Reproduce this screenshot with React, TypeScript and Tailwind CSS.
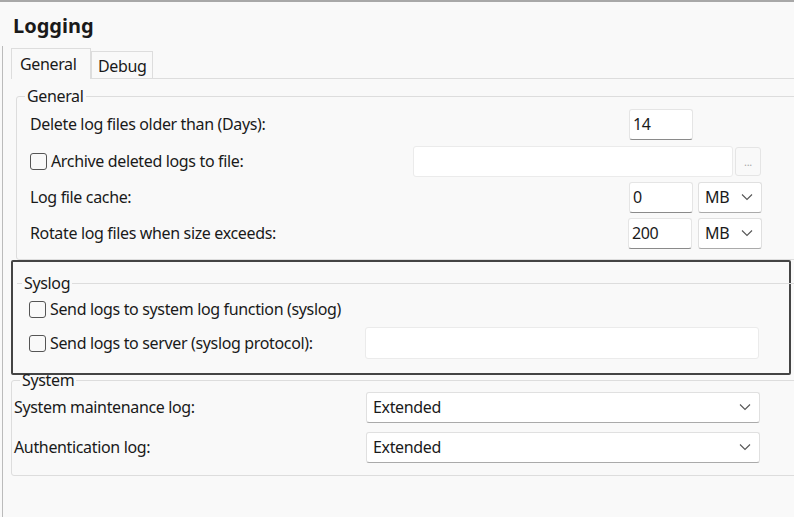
import React from "react";

const Chev = () => (
  <svg width="12" height="8" viewBox="0 0 12 8" className="text-[#555]"><path d="M1 1.5 6 6.5 11 1.5" fill="none" stroke="currentColor" strokeWidth="1.1" /></svg>
);
const Box = () => <span className="inline-block w-[17px] h-[17px] border border-[#555] rounded-[3px] bg-[#f9f9f9] mr-[4px] shrink-0" />;
const Input = ({ v, w, cls = "" }: { v?: string; w: string; cls?: string }) => (
  <div className={`${w} ${cls} h-[31px] bg-white border border-[#e5e5e5] border-b-[#8a8a8a] rounded-[3px] px-[3px] flex items-center`}>{v}</div>
);
const Sel = ({ v, w }: { v: string; w: string }) => (
  <div className={`${w} h-[31px] bg-white border border-[#e0e0e0] border-b-[#aaa] rounded-[3px] pl-[6px] pr-[8px] flex items-center justify-between`}>
    <span>{v}</span><Chev />
  </div>
);

export default function App() {
  return (
    <div className="w-[794px] h-[517px] bg-[#f9f9f9] overflow-hidden text-[16px] text-[#1a1a1a] relative" style={{ fontFamily: '"Noto Sans", "Liberation Sans", sans-serif', letterSpacing: "-0.35px" }}>
      <div className="h-[2px] bg-[#a8a8a8]" />
      <div className="pl-[13px] pt-[9px] h-[44px] text-[20px] font-bold tracking-normal">Logging</div>
      <div className="border-l border-[#bbb] ml-[2px] h-[480px] pl-[8px]">
        <div className="flex items-end h-[32px]">
          <div className="w-[80px] h-[31px] border border-[#ddd] border-b-0 bg-[#f9f9f9] pl-[8px] pt-[3px] relative top-[1px]">General</div>
          <div className="w-[62px] h-[27px] border border-[#ddd] border-b-0 pl-[6px] pt-[2px]">Debug</div>
        </div>
        <div className="border-t border-[#ddd] pl-[5px] pt-[16px]">
          <fieldset className="border border-[#ddd] rounded-[3px] w-[900px] pl-[13px] pb-[8px] -mt-[8px]">
            <legend className="px-[2px] -ml-[5px] leading-[18px]">General</legend>
            <div className="w-[732px]">
              <div className="flex items-center justify-between h-[38px]">
                <span>Delete log files older than (Days):</span>
                <div className="flex"><Input v="14" w="w-[64px]" /><div className="w-[69px]" /></div>
              </div>
              <div className="flex items-center justify-between h-[36px]">
                <span className="flex items-center"><Box />Archive deleted logs to file:</span>
                <div className="flex items-center gap-[2px] mr-[1px]"><div className="w-[320px] h-[31px] bg-white border border-[#ebebeb] rounded-[3px]" /><div className="w-[26px] h-[29px] border border-[#e5e5e5] rounded-[3px] text-[#aaa] text-[11px] flex items-end justify-center pb-[4px]">...</div></div>
              </div>
              <div className="flex items-center justify-between h-[36px]">
                <span>Log file cache:</span>
                <div className="flex gap-[5px]"><Input v="0" w="w-[64px]" /><Sel v="MB" w="w-[64px]" /></div>
              </div>
              <div className="flex items-center justify-between h-[36px]">
                <span>Rotate log files when size exceeds:</span>
                <div className="flex gap-[6px]"><Input v="200" w="w-[64px]" /><Sel v="MB" w="w-[64px]" /></div>
              </div>
            </div>
          </fieldset>
        </div>
        <div className="w-[780px] h-[115px] border-2 border-[#444] rounded-[2px] pt-[14px] pl-[4px]">
          <fieldset className="border-t border-[#ddd] w-[800px]">
            <legend className="px-[2px] ml-[5px] leading-[14px] -mb-[2px]">Syslog</legend>
            <div className="pl-[12px] pt-[4px]">
              <div className="flex items-center h-[34px]"><Box />Send logs to system log function (syslog)</div>
              <div className="flex items-center h-[34px]">
                <div className="flex items-center w-[336px]"><Box />Send logs to server (syslog protocol):</div>
                <div className="w-[394px] h-[32px] bg-white border border-[#ebebeb] rounded-[3px]" />
              </div>
            </div>
          </fieldset>
        </div>
        <fieldset className="border border-[#ddd] rounded-[3px] w-[900px] -mt-[2px] pb-[8px] pl-[2px]">
          <legend className="px-[2px] ml-[6px] leading-[14px]">System</legend>
          <div className="flex items-center h-[40px]"><span className="w-[352px]">System maintenance log:</span><Sel v="Extended" w="w-[394px]" /></div>
          <div className="flex items-center h-[40px]"><span className="w-[352px]">Authentication log:</span><Sel v="Extended" w="w-[394px]" /></div>
        </fieldset>
      </div>
    </div>
  );
}
